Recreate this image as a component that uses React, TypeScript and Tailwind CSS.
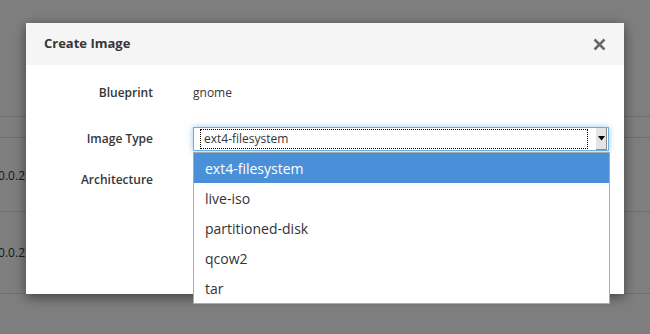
import React from "react";

const font = { fontFamily: '"Open Sans", "Noto Sans", sans-serif' };

function BgRow({ top, h, text }: { top?: boolean; h: number; text?: string }) {
  return (
    <div
      className={`flex items-center border-b border-[#dedede] ${top ? "border-t" : ""}`}
      style={{ height: h }}
    >
      {text ? (
        <div className="w-[25px] flex justify-end whitespace-nowrap text-[12px] text-[#333]">{text}</div>
      ) : null}
    </div>
  );
}

export default function App() {
  const items = ["ext4-filesystem", "live-iso", "partitioned-disk", "qcow2", "tar"];
  return (
    <div className="relative w-[650px] h-[334px] overflow-hidden bg-white" style={font}>
      {/* page behind */}
      <div className="flex flex-col pt-[116px]">
        <div className="h-[22px] border-t border-b border-[#dedede]" />
        <div className="h-[74px] border-b border-[#dedede] flex items-center">
          <div className="w-[25px] flex justify-end whitespace-nowrap text-[12px] text-[#333] pt-[2px]">0.0.2</div>
        </div>
        <div className="h-[82px] border-b border-[#dedede] flex items-center">
          <div className="w-[25px] flex justify-end whitespace-nowrap text-[12px] text-[#333] pt-[0px]">0.0.2</div>
        </div>
      </div>
      {/* backdrop */}
      <div className="absolute inset-0 bg-black/50" />
      {/* modal */}
      <div className="absolute left-[26px] top-[23px] w-[598px] h-[271px] bg-white shadow-[0_3px_12px_rgba(0,0,0,0.5)] flex flex-col">
        <div className="h-[42px] bg-[#f5f5f5] flex items-center justify-between pl-[18px] pr-[18px]">
          <div className="text-[13px] font-bold text-[#363636]">Create Image</div>
          <svg width="13" height="13" viewBox="0 0 13 13">
            <path d="M1.5 1.5 L11.5 11.5 M11.5 1.5 L1.5 11.5" stroke="#6a6a6a" strokeWidth="2.6" />
          </svg>
        </div>
        <div className="flex flex-col pt-[16px] pl-[18px] pr-[15px]">
          <div className="flex items-center h-[24px]">
            <div className="w-[109px] text-right text-[12px] font-semibold text-[#363636]">Blueprint</div>
            <div className="ml-[40px] text-[12px] text-[#363636]">gnome</div>
          </div>
          <div className="flex items-center h-[24px] mt-[22px]">
            <div className="w-[109px] text-right text-[12px] font-semibold text-[#363636]">Image Type</div>
            <div className="ml-[40px] flex-1 h-[24px] border border-[#66afe9] shadow-[0_0_6px_rgba(102,175,233,0.7)] bg-white flex items-center pl-[6px] pr-[1px]">
              <div className="flex-1 h-[20px] border border-dotted border-black flex items-center pl-[3px] text-[12px] text-[#333]">
                ext4-filesystem
              </div>
              <div className="ml-[8px] w-[11px] h-[22px] bg-[#e4e4e4] border-r border-b border-[#8a8a8a] flex items-center justify-center">
                <svg width="7" height="5" viewBox="0 0 7 5">
                  <path d="M0 0 H7 L3.5 4.5 Z" fill="#000" />
                </svg>
              </div>
            </div>
          </div>
          <div className="flex items-center h-[24px] mt-[17px]">
            <div className="w-[109px] text-right text-[12px] font-semibold text-[#363636]">Architecture</div>
          </div>
        </div>
      </div>
      {/* dropdown list */}
      <div className="absolute left-[193px] top-[152px] w-[417px] bg-white border border-[#ababab] flex flex-col">
        {items.map((it, i) => (
          <div
            key={it}
            className={`h-[30px] flex items-center pl-[11px] text-[14px] ${
              i === 0 ? "bg-[#4a90d9] text-white" : "text-[#333]"
            }`}
          >
            {it}
          </div>
        ))}
      </div>
    </div>
  );
}
